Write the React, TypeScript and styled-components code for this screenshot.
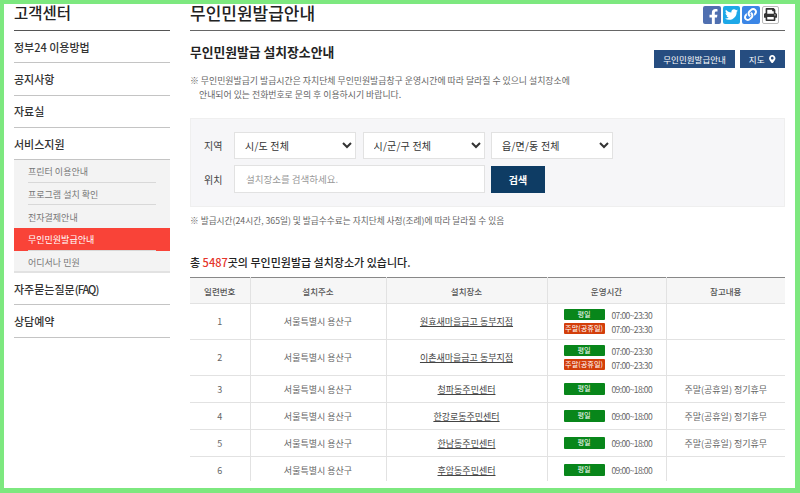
import React from "react";
import styled, { createGlobalStyle } from "styled-components";
import { FaFacebookF, FaTwitter, FaLink, FaPrint, FaMapMarkerAlt } from "react-icons/fa";

const Global = createGlobalStyle`
  html, body { margin: 0; padding: 0; background: #fff; }
  body { font-family: "Noto Sans CJK KR", "Noto Sans", sans-serif; color: #333; }
  * { box-sizing: border-box; }
`;
const Frame = styled.div`
  width: 800px; height: 493px; overflow: hidden; background: #fff;
  border: solid #7de87f; border-width: 4px 5px 5px 4px;
  display: flex; padding: 0 10px 0 10px; gap: 20px;
`;
const Side = styled.aside`width: 156px; flex: none;`;
const SideTitle = styled.h2`
  margin: 0; height: 27px; border-bottom: 1px solid #555; font-size: 15.5px; font-weight: 500; line-height: 17px; color: #222;
`;
const SideItem = styled.div`
  height: 32.3px; display: flex; align-items: center; font-size: 11px; font-weight: 500; color: #333;
  border-bottom: 1px solid #c4c4c4;
`;
const Tight = styled.span`letter-spacing: -1px;`;
const SubPanel = styled.div`background: #f3f3f3; border-bottom: 2px solid #e2e2e2; height: 113px;`;
const SubItem = styled.div<{ $active?: boolean; $line?: boolean }>`
  height: 22.6px; display: flex; align-items: center; padding: 1px 14px 0; font-size: 9px;
  color: ${p => (p.$active ? "#fff" : "#777")};
  background: ${p => (p.$active ? "#f94338" : "transparent")};
  position: relative;
  &::after {
    content: ""; position: absolute; left: 14px; right: 14px; bottom: 0; height: 1px;
    background: ${p => (p.$line ? "#d8d8d8" : "transparent")};
  }
`;
const Main = styled.main`flex: 1; min-width: 0; width: 595px;`;
const TopBar = styled.div`
  height: 27px; border-bottom: 1px solid #666; display: flex; justify-content: space-between; align-items: flex-start;
`;
const PageTitle = styled.h1`margin: 0; font-size: 17px; font-weight: 500; line-height: 17px; color: #222;`;
const Shares = styled.div`display: flex; gap: 2px; margin: 2px 0 0 0; padding-right: 6px;`;
const Share = styled.span<{ $bg: string }>`
  width: 17.5px; height: 17.5px; border-radius: 2px; background: ${p => p.$bg}; color: #fff;
  display: flex; align-items: center; justify-content: center; font-size: 13px;
`;
const Facebook = styled(Share)`
  font-size: 15px; align-items: flex-end; justify-content: flex-end; overflow: hidden;
`;
const Print = styled(Share)`border: 1px solid #bbb; color: #333;`;
const HeadRow = styled.div`display: flex; justify-content: space-between; align-items: flex-start; margin-top: 11px;`;
const H3 = styled.h3`margin: 0; font-size: 12.8px; font-weight: 700; line-height: 20px; color: #222;`;
const Btns = styled.div`display: flex; gap: 5px; margin-top: 8px;`;
const NavyBtn = styled.span`
  height: 18px; padding: 0 9px; background: #264d80; color: #fff; font-size: 8.5px;
  display: flex; align-items: center; gap: 3px;
`;
const Note = styled.p`margin: 6px 0 0; font-size: 8.9px; line-height: 14px; color: #666;`;
const Indent = styled.span`display: block; padding-left: 9px;`;
const SearchPanel = styled.div`
  margin-top: 16px; height: 89px; background: #f6f6f8; border: 1px solid #efefef; padding: 13px 13px;
  display: grid; grid-template-columns: 23.5px 122px 122px 122px; column-gap: 6.5px; row-gap: 6.5px; grid-auto-rows: 27px;
  align-items: center;
`;
const Label = styled.span`font-size: 10px; color: #444;`;
const Select = styled.select`
  height: 27px; width: 122px; border: 1px solid #e2e2e2; background: #fff; font: 10px "Noto Sans CJK KR", sans-serif; letter-spacing: .2px; color: #333; padding: 0 6px;
`;
const Input = styled.input`
  grid-column: span 2; height: 28px; border: 1px solid #e2e2e2; background: #fff; padding: 0 11px; font: 9.5px "Noto Sans CJK KR", sans-serif;
  &::placeholder { color: #999; }
`;
const SearchBtn = styled.span`
  width: 54px; height: 27px; background: #0e3c64; color: #fff; font-size: 10px; font-weight: 700;
  display: flex; align-items: center; justify-content: center;
`;
const Note2 = styled.p`margin: 7px 0 0; font-size: 8.7px; line-height: 14px; color: #666;`;
const Count = styled.p`margin: 26px 0 0; font-size: 11px; font-weight: 500; line-height: 16px; color: #222;`;
const Red = styled.b`color: #e5342a; font-weight: 500;`;
const TableWrap = styled.div`margin-top: 7px; height: 204px; overflow: hidden;`;
const Table = styled.table`
  width: 595px; border-collapse: collapse; table-layout: fixed; border-top: 1px solid #888; font-size: 9px; color: #666;
`;
const Th = styled.th`
  height: 26px; background: #f6f6f6; font-weight: 500; font-size: 8.5px; color: #555; border: 1px solid #e2e2e2; border-top: 0;
  &:first-child { border-left: 0; } &:last-child { border-right: 0; }
`;
const Td = styled.td`
  border: 1px solid #e2e2e2; text-align: center; padding: 0;
  &:first-child { border-left: 0; } &:last-child { border-right: 0; }
`;
const Tr = styled.tr<{ $h: number }>`height: ${p => p.$h}px;`;
const Place = styled.span`text-decoration: underline; color: #444;`;
const Hours = styled.div`display: flex; flex-direction: column; gap: 2px; padding-left: 16px;`;
const HourRow = styled.div`display: flex; align-items: center; gap: 7px; height: 12px; font-size: 8.5px;`;
const Time = styled.span`letter-spacing: -0.6px;`;
const Tag = styled.span<{ $w?: boolean }>`
  width: 41px; height: 11.5px; border-radius: 1px; color: #fff; font-size: 7.2px; line-height: 11.5px; text-align: center; white-space: nowrap;
  background: ${p => (p.$w ? "#d33e0a" : "#08861a")};
`;

const rows = [
  { n: 1, p: "원효새마을금고 동부지점", two: true, note: "", t: "07:00~23:30" },
  { n: 2, p: "이촌새마을금고 동부지점", two: true, note: "", t: "07:00~23:30" },
  { n: 3, p: "청파동주민센터", two: false, note: "주말(공휴일) 정기휴무", t: "09:00~18:00" },
  { n: 4, p: "한강로동주민센터", two: false, note: "주말(공휴일) 정기휴무", t: "09:00~18:00" },
  { n: 5, p: "한남동주민센터", two: false, note: "주말(공휴일) 정기휴무", t: "09:00~18:00" },
  { n: 6, p: "후암동주민센터", two: false, note: "", t: "09:00~18:00" },
];

export default function App() {
  return (
    <Frame>
      <Global />
      <Side>
        <SideTitle>고객센터</SideTitle>
        <SideItem>정부24 이용방법</SideItem>
        <SideItem>공지사항</SideItem>
        <SideItem>자료실</SideItem>
        <SideItem>서비스지원</SideItem>
        <SubPanel>
          <SubItem $line>프린터 이용안내</SubItem>
          <SubItem $line>프로그램 설치 확인</SubItem>
          <SubItem>전자결제안내</SubItem>
          <SubItem $active $line>무인민원발급안내</SubItem>
          <SubItem>어디서나 민원</SubItem>
        </SubPanel>
        <SideItem>자주묻는질문<Tight>(FAQ)</Tight></SideItem>
        <SideItem>상담예약</SideItem>
      </Side>
      <Main>
        <TopBar>
          <PageTitle>무인민원발급안내</PageTitle>
          <Shares>
            <Facebook $bg="#4f6fb0"><FaFacebookF /></Facebook>
            <Share $bg="#1da8e8"><FaTwitter /></Share>
            <Share $bg="#3b86e6"><FaLink /></Share>
            <Print $bg="#fff"><FaPrint /></Print>
          </Shares>
        </TopBar>
        <HeadRow>
          <H3>무인민원발급 설치장소안내</H3>
          <Btns>
            <NavyBtn>무인민원발급안내</NavyBtn>
            <NavyBtn>지도 <FaMapMarkerAlt /></NavyBtn>
          </Btns>
        </HeadRow>
        <Note>
          ※ 무인민원발급기 발급시간은 자치단체 무인민원발급창구 운영시간에 따라 달라질 수 있으니 설치장소에
          <Indent>안내되어 있는 전화번호로 문의 후 이용하시기 바랍니다.</Indent>
        </Note>
        <SearchPanel>
          <Label>지역</Label>
          <Select><option>시/도 전체</option></Select>
          <Select><option>시/군/구 전체</option></Select>
          <Select><option>읍/면/동 전체</option></Select>
          <Label>위치</Label>
          <Input placeholder="설치장소를 검색하세요." />
          <SearchBtn>검색</SearchBtn>
        </SearchPanel>
        <Note2>※ 발급시간(24시간, 365일) 및 발급수수료는 자치단체 사정(조례)에 따라 달라질 수 있음</Note2>
        <Count>총 <Red>5487</Red>곳의 무인민원발급 설치장소가 있습니다.</Count>
        <TableWrap>
          <Table>
            <colgroup>
              <col width="60" /><col width="136" /><col width="161" /><col width="119" /><col width="119" />
            </colgroup>
            <thead>
              <tr>
                <Th>일련번호</Th><Th>설치주소</Th><Th>설치장소</Th><Th>운영시간</Th><Th>참고내용</Th>
              </tr>
            </thead>
            <tbody>
              {rows.map(r => (
                <Tr key={r.n} $h={r.two ? 36 : 27}>
                  <Td>{r.n}</Td>
                  <Td>서울특별시 용산구</Td>
                  <Td><Place>{r.p}</Place></Td>
                  <Td>
                    <Hours>
                      <HourRow><Tag>평일</Tag><Time>{r.t}</Time></HourRow>
                      {r.two && <HourRow><Tag $w>주말(공휴일)</Tag><Time>{r.t}</Time></HourRow>}
                    </Hours>
                  </Td>
                  <Td>{r.note}</Td>
                </Tr>
              ))}
            </tbody>
          </Table>
        </TableWrap>
      </Main>
    </Frame>
  );
}
